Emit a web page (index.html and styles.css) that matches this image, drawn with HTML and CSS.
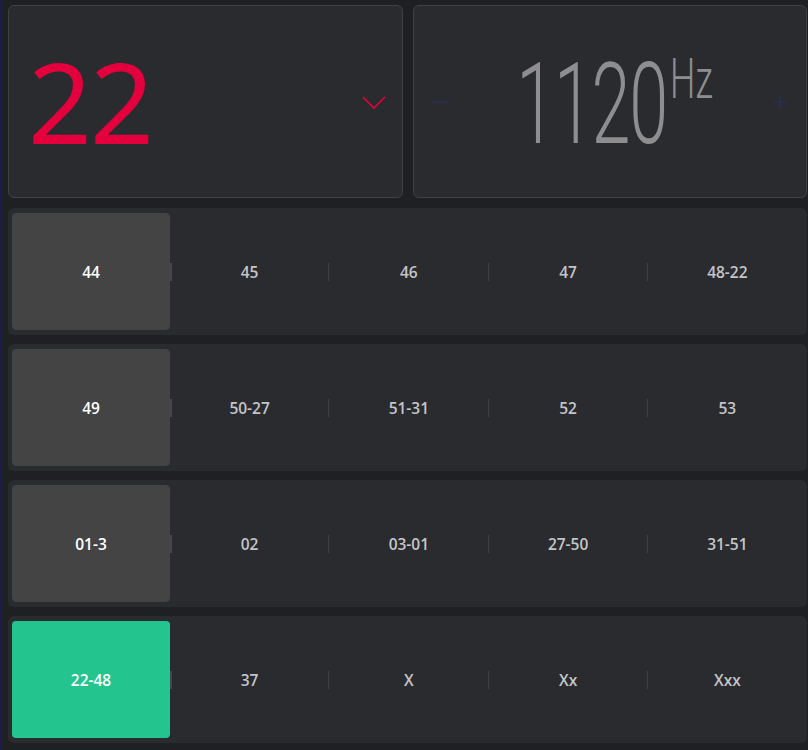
FILE: index.html
```html
<!DOCTYPE html>
<html lang="en">
<head>
<meta charset="utf-8">
<title>Channel</title>
<link rel="stylesheet" href="styles.css">
</head>
<body>
<div class="app">
  <div class="top">
    <div class="card chan">
      <span class="chan-num">22</span>
      <svg class="chev" width="24" height="14" viewBox="0 0 24 14"><path d="M1 1 L12 12 L23 1" fill="none" stroke="#e4003c" stroke-width="1.6"/></svg>
    </div>
    <div class="card freq">
      <svg class="pm" width="20" height="16" viewBox="0 0 20 16"><path d="M1 8 H19" stroke="#2a2d62" stroke-width="1.2"/></svg>
      <div class="freq-val"><span class="num">1120</span><span class="unit">Hz</span></div>
      <svg class="pm" width="20" height="16" viewBox="0 0 20 16"><path d="M3 8 H17 M10 1 V15" stroke="#2a2d62" stroke-width="1.2"/></svg>
    </div>
  </div>
  <div class="rows">
    <div class="row">
      <div class="cell"><span class="btn sel">44</span></div>
      <div class="cell">45</div>
      <div class="cell">46</div>
      <div class="cell">47</div>
      <div class="cell">48-22</div>
    </div>
    <div class="row">
      <div class="cell"><span class="btn sel">49</span></div>
      <div class="cell">50-27</div>
      <div class="cell">51-31</div>
      <div class="cell">52</div>
      <div class="cell">53</div>
    </div>
    <div class="row">
      <div class="cell"><span class="btn sel">01-3</span></div>
      <div class="cell">02</div>
      <div class="cell">03-01</div>
      <div class="cell">27-50</div>
      <div class="cell">31-51</div>
    </div>
    <div class="row">
      <div class="cell"><span class="btn active">22-48</span></div>
      <div class="cell">37</div>
      <div class="cell">X</div>
      <div class="cell">Xx</div>
      <div class="cell">Xxx</div>
    </div>
  </div>
</div>
</body>
</html>
```

FILE: styles.css
```css
* { box-sizing: border-box; }
html, body { height: 100%; }
body {
  margin: 0;
  background: #1f2024;
  border-left: 2px solid #1c1c4c;
  padding: 5px 0 0 6px;
  overflow: hidden;
  font-family: "Open Sans", "Noto Sans", sans-serif;
}
.app { width: 799px; }
.top {
  display: grid;
  grid-template-columns: 1fr 1fr;
  gap: 10px;
  height: 193px;
}
.card {
  background: #2a2b2f;
  border: 1px solid #404146;
  border-radius: 6px;
  display: flex;
  align-items: center;
}
.chan { padding: 0 16px 0 19px; justify-content: space-between; }
.chan-num {
  color: #e4003c;
  font-family: "Noto Sans", "Open Sans", sans-serif;
  font-size: 112px;
  font-weight: 400;
  line-height: 1;
  margin-top: -2px;
  letter-spacing: -2px;
}
.chev { margin-top: 2px; }
.freq { justify-content: space-between; padding: 0 16px 0 16px; }
.freq-val {
  display: flex;
  align-items: flex-start;
  color: #8e8e90;
  font-family: Roboto, "Liberation Sans", sans-serif;
  font-weight: 300;
  margin-top: 4px;
}
.num {
  font-size: 114px;
  line-height: 1;
  display: inline-block;
  transform: scaleX(0.615);
  transform-origin: right center;
  margin-left: -84px;
  letter-spacing: -2px;
}
.unit {
  font-size: 56px;
  line-height: 1;
  display: inline-block;
  transform: scaleX(0.64);
  transform-origin: left top;
  margin-left: 3px;
  margin-right: -24px;
  margin-top: 4px;
}
.rows {
  margin-top: 10px;
  display: flex;
  flex-direction: column;
  gap: 9px;
}
.row {
  height: 127px;
  background: #2a2b2f;
  border-radius: 6px;
  display: grid;
  grid-template-columns: 158px repeat(4, 1fr);
  padding: 5px 0 5px 4px;
}
.cell {
  position: relative;
  display: flex;
  align-items: center;
  justify-content: center;
  color: #c4c5c8;
  font-size: 15.5px;
  font-weight: 600;
}
.cell:not(:last-child)::after {
  content: "";
  position: absolute;
  right: 0;
  top: 50%;
  width: 1px;
  height: 18px;
  margin-top: -9px;
  background: #3e3f44;
}
.cell:first-child::after { right: -2px; width: 2px; background: #46474a; }
.btn {
  width: 100%;
  height: 100%;
  display: flex;
  align-items: center;
  justify-content: center;
  border-radius: 4px;
  color: #ffffff;
}
.btn.sel { background: #444444; border: 1px solid #3c4845; }
.btn.active { background: #23c48e; }
```
